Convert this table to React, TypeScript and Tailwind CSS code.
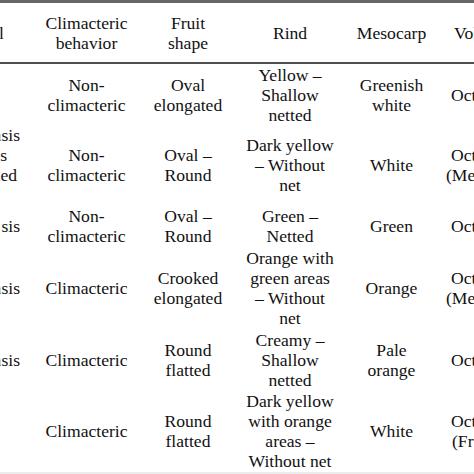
const rows = [
  {
    h: "h-[62px]",
    group: [],
    climacteric: ["Non-", "climacteric"],
    shape: ["Oval", "elongated"],
    rind: ["Yellow –", "Shallow", "netted"],
    mesocarp: ["Greenish", "white"],
    volatile: [{ t: "Octyl", pad: "pl-[9px]" }],
  },
  {
    h: "h-[80px]",
    group: [
      { t: "Cantalupensis", mr: "mr-0" },
      { t: "x Inodorus", mr: "mr-[13px]" },
      { t: "mixed", mr: "mr-[3px]" },
      { t: "\u00a0", mr: "mr-0" },
    ],
    climacteric: ["Non-", "climacteric"],
    shape: ["Oval –", "Round"],
    rind: ["Dark yellow", "– Without", "net"],
    mesocarp: ["White"],
    volatile: [
      { t: "Octyl", pad: "pl-[9px]" },
      { t: "(Medium)", pad: "pl-[4px]" },
    ],
  },
  {
    h: "h-[42px]",
    group: [{ t: "Reticulatus sis", mr: "mr-0" }],
    climacteric: ["Non-", "climacteric"],
    shape: ["Oval –", "Round"],
    rind: ["Green –", "Netted"],
    mesocarp: ["Green"],
    volatile: [{ t: "Octyl", pad: "pl-[9px]" }],
  },
  {
    h: "h-[82px]",
    group: [{ t: "Cantalupensis", mr: "mr-0" }],
    climacteric: ["Climacteric"],
    shape: ["Crooked", "elongated"],
    rind: ["Orange with", "green areas", "– Without", "net"],
    mesocarp: ["Orange"],
    volatile: [
      { t: "Octyl", pad: "pl-[9px]" },
      { t: "(Medium)", pad: "pl-[4px]" },
    ],
  },
  {
    h: "h-[61px]",
    group: [{ t: "Cantalupensis", mr: "mr-0" }],
    climacteric: ["Climacteric"],
    shape: ["Round", "flatted"],
    rind: ["Creamy –", "Shallow", "netted"],
    mesocarp: ["Pale", "orange"],
    volatile: [{ t: "Octyl", pad: "pl-[9px]" }],
  },
  {
    h: "h-[81px]",
    group: [],
    climacteric: ["Climacteric"],
    shape: ["Round", "flatted"],
    rind: ["Dark yellow", "with orange", "areas –", "Without net"],
    mesocarp: ["White"],
    volatile: [
      { t: "Octyl", pad: "pl-[9px]" },
      { t: "(Fruity)", pad: "pl-[10px]" },
    ],
  },
];

function Lines({ items }: { items: string[] }) {
  return (
    <>
      {items.map((l, i) => (
        <span key={i} className="block whitespace-nowrap">
          {l}
        </span>
      ))}
    </>
  );
}

function App() {
  return (
    <div className="w-[474px] h-[474px] overflow-hidden bg-white flex flex-col">
      <div className="h-[3px] shrink-0 bg-[#666]" />
      <div className="flex-1 overflow-hidden">
        <table className="ml-[-84px] border-collapse table-fixed w-[666px] font-['Liberation_Serif','DejaVu_Serif',serif] text-[17.6px] leading-[20px] text-[#111]">
          <colgroup>
            <col className="w-[120px]" />
            <col className="w-[101px]" />
            <col className="w-[102px]" />
            <col className="w-[102px]" />
            <col className="w-[101px]" />
            <col className="w-[140px]" />
          </colgroup>
          <thead>
            <tr className="h-[60px] border-b-2 border-[#505050]">
              <th className="font-normal text-right align-middle pr-[32px]">
                Botanical
              </th>
              <th className="font-normal text-center align-middle">
                <Lines items={["Climacteric", "behavior"]} />
              </th>
              <th className="font-normal text-center align-middle">
                <Lines items={["Fruit", "shape"]} />
              </th>
              <th className="font-normal text-center align-middle">Rind</th>
              <th className="font-normal text-center align-middle">Mesocarp</th>
              <th className="font-normal text-left align-middle pl-[12px] whitespace-nowrap">
                Volatile profile
              </th>
            </tr>
          </thead>
          <tbody>
            {rows.map((r, i) => (
              <tr key={i} className={r.h}>
                <td className="p-0 text-right align-middle pr-[16px]">
                  {r.group.map((g, j) => (
                    <span key={j} className={`block whitespace-nowrap ${g.mr}`}>
                      {g.t}
                    </span>
                  ))}
                </td>
                <td className="p-0 text-center align-middle">
                  <Lines items={r.climacteric} />
                </td>
                <td className="p-0 text-center align-middle">
                  <Lines items={r.shape} />
                </td>
                <td className="p-0 text-center align-middle">
                  <Lines items={r.rind} />
                </td>
                <td className="p-0 text-center align-middle">
                  <Lines items={r.mesocarp} />
                </td>
                <td className="p-0 text-left align-middle">
                  {r.volatile.map((v, j) => (
                    <span key={j} className={`block whitespace-nowrap ${v.pad}`}>
                      {v.t}
                    </span>
                  ))}
                </td>
              </tr>
            ))}
          </tbody>
        </table>
      </div>
      <div className="h-[2px] shrink-0 bg-[#ececec]" />
    </div>
  );
}

export default App;
